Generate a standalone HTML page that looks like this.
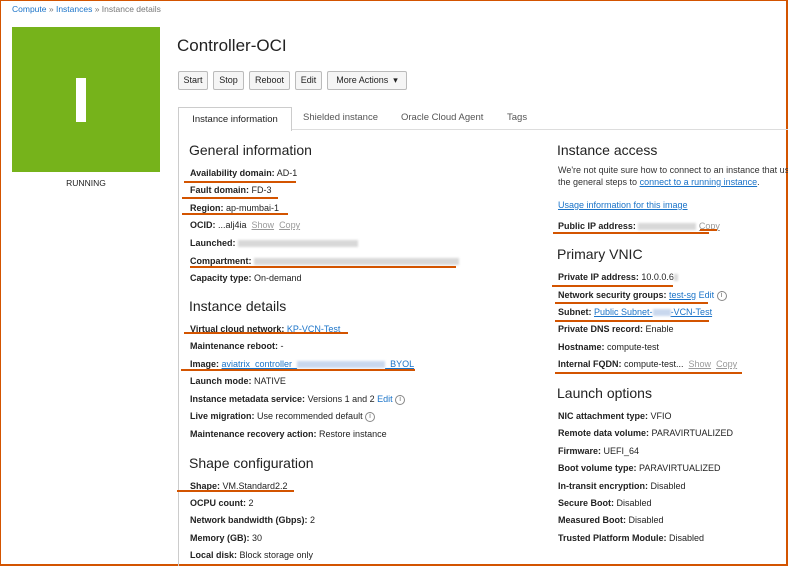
<!DOCTYPE html>
<html><head><meta charset="utf-8"><style>
*{margin:0;padding:0;box-sizing:border-box}
body{width:788px;height:566px;overflow:hidden;background:#fff;font-family:"Liberation Sans",Arial,sans-serif;color:#222;position:relative;font-size:9px}
.a{position:absolute;white-space:nowrap}
.r{position:absolute;white-space:nowrap;font-size:9px;line-height:10px;transform:translateY(-5px)}
.r b{font-weight:bold;color:#222}
.h{position:absolute;white-space:nowrap;font-size:14px;line-height:16px;transform:translateY(-8px);color:#222}
.lk{color:#1a73c8;text-decoration:underline}
.gr{color:#999;text-decoration:underline}
.bl{display:inline-block;background:#d8d8d8;height:7px;vertical-align:middle;filter:blur(1px)}
.u{position:absolute;height:2px;background:#d35400}
.btn{position:absolute;top:71px;height:19px;border:1px solid #bbb;background:#f5f5f5;font-size:9px;line-height:17px;text-align:center;border-radius:2px;color:#222}
.info{display:inline-block;width:10px;height:10px;border:1px solid #888;border-radius:50%;font-size:7px;line-height:8px;text-align:center;color:#666;vertical-align:middle}
</style></head><body>
<div class="a" style="left:0;top:0;width:788px;height:566px;border:1px solid #d35400;border-width:1px 2px 2px 1px"></div>
<div class="a" style="left:12px;top:4px;font-size:8.5px;color:#777"><span style="color:#1a73c8">Compute</span> » <span style="color:#1a73c8">Instances</span> » Instance details</div>
<div class="a" style="left:12px;top:27px;width:148px;height:145px;background:#76b31b"></div>
<div class="a" style="left:76px;top:78px;width:10px;height:44px;background:#fff"></div>
<div class="a" style="left:12px;top:178px;width:148px;text-align:center;font-size:8.5px;color:#222">RUNNING</div>
<div class="a" style="left:177px;top:36px;font-size:17px;color:#222">Controller-OCI</div>
<div class="btn" style="left:178px;width:30px">Start</div>
<div class="btn" style="left:213px;width:31px">Stop</div>
<div class="btn" style="left:249px;width:41px">Reboot</div>
<div class="btn" style="left:295px;width:27px">Edit</div>
<div class="btn" style="left:327px;width:80px">More Actions &nbsp;▾</div>
<div class="a" style="left:178px;top:129px;width:610px;height:1px;background:#ddd"></div>
<div class="a" style="left:178px;top:107px;width:114px;height:24px;border:1px solid #ccc;border-bottom:none;background:#fff;font-size:9.5px;line-height:24px;text-align:center">Instance information</div>
<div class="a" style="left:178px;top:130px;width:1px;height:436px;background:#ccc"></div>
<div class="a" style="left:303px;top:112px;font-size:9.5px;color:#555">Shielded instance</div>
<div class="a" style="left:401px;top:112px;font-size:9.5px;color:#555">Oracle Cloud Agent</div>
<div class="a" style="left:507px;top:112px;font-size:9.5px;color:#555">Tags</div>

<div class="h" style="left:189px;top:150px">General information</div>
<div class="r" style="left:190px;top:173px"><b>Availability domain:</b> AD-1</div>
<div class="r" style="left:190px;top:190px"><b>Fault domain:</b> FD-3</div>
<div class="r" style="left:190px;top:208px"><b>Region:</b> ap-mumbai-1</div>
<div class="r" style="left:190px;top:225px"><b>OCID:</b> ...alj4ia &nbsp;<span class="gr">Show</span> &nbsp;<span class="gr">Copy</span></div>
<div class="r" style="left:190px;top:243px"><b>Launched:</b> <span class="bl" style="width:120px"></span></div>
<div class="r" style="left:190px;top:261px"><b>Compartment:</b> <span class="bl" style="width:205px"></span></div>
<div class="r" style="left:190px;top:278px"><b>Capacity type:</b> On-demand</div>

<div class="h" style="left:189px;top:306px">Instance details</div>
<div class="r" style="left:190px;top:329px"><b>Virtual cloud network:</b> <span class="lk">KP-VCN-Test</span></div>
<div class="r" style="left:190px;top:346px"><b>Maintenance reboot:</b> -</div>
<div class="r" style="left:190px;top:364px"><b>Image:</b> <span class="lk">aviatrix_controller_<span class="bl" style="width:88px;background:#c9d8ee"></span>_BYOL</span></div>
<div class="r" style="left:190px;top:381px"><b>Launch mode:</b> NATIVE</div>
<div class="r" style="left:190px;top:399px"><b>Instance metadata service:</b> Versions 1 and 2 <span class="lk" style="text-decoration:none">Edit</span> <span class="info">i</span></div>
<div class="r" style="left:190px;top:416px"><b>Live migration:</b> Use recommended default <span class="info">i</span></div>
<div class="r" style="left:190px;top:434px"><b>Maintenance recovery action:</b> Restore instance</div>

<div class="h" style="left:189px;top:463px">Shape configuration</div>
<div class="r" style="left:190px;top:486px"><b>Shape:</b> VM.Standard2.2</div>
<div class="r" style="left:190px;top:503px"><b>OCPU count:</b> 2</div>
<div class="r" style="left:190px;top:520px"><b>Network bandwidth (Gbps):</b> 2</div>
<div class="r" style="left:190px;top:538px"><b>Memory (GB):</b> 30</div>
<div class="r" style="left:190px;top:555px"><b>Local disk:</b> Block storage only</div>

<div class="h" style="left:557px;top:150px">Instance access</div>
<div class="r" style="left:558px;top:170px;color:#333">We're not quite sure how to connect to an instance that use</div>
<div class="r" style="left:558px;top:182px;color:#333">the general steps to <span class="lk">connect to a running instance</span>.</div>
<div class="r" style="left:558px;top:205px"><span class="lk">Usage information for this image</span></div>
<div class="r" style="left:558px;top:226px"><b>Public IP address:</b> <span class="bl" style="width:58px"></span> <span class="gr">Copy</span></div>
<div class="h" style="left:557px;top:254px">Primary VNIC</div>
<div class="r" style="left:558px;top:277px"><b>Private IP address:</b> 10.0.0.6<span class="bl" style="width:4px"></span></div>
<div class="r" style="left:558px;top:295px"><b>Network security groups:</b> <span class="lk">test-sg</span> <span class="lk" style="text-decoration:none">Edit</span> <span class="info">i</span></div>
<div class="r" style="left:558px;top:312px"><b>Subnet:</b> <span class="lk">Public Subnet-<span class="bl" style="width:18px;background:#c9d8ee"></span>-VCN-Test</span></div>
<div class="r" style="left:558px;top:329px"><b>Private DNS record:</b> Enable</div>
<div class="r" style="left:558px;top:347px"><b>Hostname:</b> compute-test</div>
<div class="r" style="left:558px;top:364px"><b>Internal FQDN:</b> compute-test... &nbsp;<span class="gr">Show</span> &nbsp;<span class="gr">Copy</span></div>

<div class="h" style="left:557px;top:393px">Launch options</div>
<div class="r" style="left:558px;top:416px"><b>NIC attachment type:</b> VFIO</div>
<div class="r" style="left:558px;top:433px"><b>Remote data volume:</b> PARAVIRTUALIZED</div>
<div class="r" style="left:558px;top:451px"><b>Firmware:</b> UEFI_64</div>
<div class="r" style="left:558px;top:468px"><b>Boot volume type:</b> PARAVIRTUALIZED</div>
<div class="r" style="left:558px;top:486px"><b>In-transit encryption:</b> Disabled</div>
<div class="r" style="left:558px;top:503px"><b>Secure Boot:</b> Disabled</div>
<div class="r" style="left:558px;top:520px"><b>Measured Boot:</b> Disabled</div>
<div class="r" style="left:558px;top:538px"><b>Trusted Platform Module:</b> Disabled</div>

<div class="u" style="left:184px;top:181px;width:112px"></div>
<div class="u" style="left:182px;top:197px;width:96px"></div>
<div class="u" style="left:182px;top:213px;width:106px"></div>
<div class="u" style="left:190px;top:266px;width:266px"></div>
<div class="u" style="left:184px;top:332px;width:164px"></div>
<div class="u" style="left:181px;top:369px;width:234px"></div>
<div class="u" style="left:177px;top:490px;width:117px"></div>
<div class="u" style="left:553px;top:232px;width:156px"></div>
<div class="u" style="left:700px;top:229px;width:17px"></div>
<div class="u" style="left:552px;top:285px;width:121px"></div>
<div class="u" style="left:555px;top:302px;width:153px"></div>
<div class="u" style="left:555px;top:320px;width:154px"></div>
<div class="u" style="left:555px;top:372px;width:187px"></div>
</body></html>
